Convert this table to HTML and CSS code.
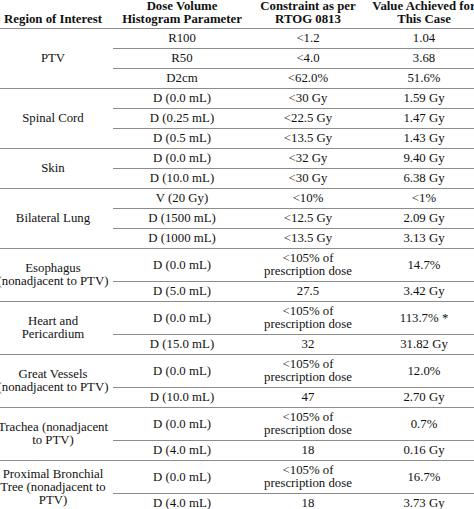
FILE: index.html
```html
<!DOCTYPE html>
<html>
<head>
<meta charset="utf-8">
<link rel="stylesheet" href="styles.css">
</head>
<body>
<div class="crop">
<table class="dvh">
<thead>
<tr>
<th class="c1">Region of Interest</th>
<th class="c2">Dose Volume<br>Histogram Parameter</th>
<th class="c3">Constraint as per<br>RTOG 0813</th>
<th class="c4">Value Achieved for<br>This Case</th>
</tr>
</thead>
<tbody>
<tr><td class="roi" rowspan="3">PTV</td><td>R100</td><td>&lt;1.2</td><td>1.04</td></tr>
<tr><td>R50</td><td>&lt;4.0</td><td>3.68</td></tr>
<tr><td>D2cm</td><td>&lt;62.0%</td><td>51.6%</td></tr>

<tr><td class="roi" rowspan="3">Spinal Cord</td><td>D (0.0 mL)</td><td>&lt;30 Gy</td><td>1.59 Gy</td></tr>
<tr><td>D (0.25 mL)</td><td>&lt;22.5 Gy</td><td>1.47 Gy</td></tr>
<tr><td>D (0.5 mL)</td><td>&lt;13.5 Gy</td><td>1.43 Gy</td></tr>

<tr><td class="roi" rowspan="2">Skin</td><td>D (0.0 mL)</td><td>&lt;32 Gy</td><td>9.40 Gy</td></tr>
<tr><td>D (10.0 mL)</td><td>&lt;30 Gy</td><td>6.38 Gy</td></tr>

<tr><td class="roi" rowspan="3">Bilateral Lung</td><td>V (20 Gy)</td><td>&lt;10%</td><td>&lt;1%</td></tr>
<tr><td>D (1500 mL)</td><td>&lt;12.5 Gy</td><td>2.09 Gy</td></tr>
<tr><td>D (1000 mL)</td><td>&lt;13.5 Gy</td><td>3.13 Gy</td></tr>

<tr><td class="roi" rowspan="2">Esophagus<br>(nonadjacent to PTV)</td><td>D (0.0 mL)</td><td>&lt;105% of<br>prescription dose</td><td>14.7%</td></tr>
<tr><td>D (5.0 mL)</td><td>27.5</td><td>3.42 Gy</td></tr>

<tr><td class="roi" rowspan="2">Heart and<br>Pericardium</td><td>D (0.0 mL)</td><td>&lt;105% of<br>prescription dose</td><td>113.7% *</td></tr>
<tr><td>D (15.0 mL)</td><td>32</td><td>31.82 Gy</td></tr>

<tr><td class="roi" rowspan="2">Great Vessels<br>(nonadjacent to PTV)</td><td>D (0.0 mL)</td><td>&lt;105% of<br>prescription dose</td><td>12.0%</td></tr>
<tr><td>D (10.0 mL)</td><td>47</td><td>2.70 Gy</td></tr>

<tr><td class="roi" rowspan="2">Trachea (nonadjacent<br>to PTV)</td><td>D (0.0 mL)</td><td>&lt;105% of<br>prescription dose</td><td>0.7%</td></tr>
<tr><td>D (4.0 mL)</td><td>18</td><td>0.16 Gy</td></tr>

<tr><td class="roi" rowspan="2">Proximal Bronchial<br>Tree (nonadjacent to<br>PTV)</td><td>D (0.0 mL)</td><td>&lt;105% of<br>prescription dose</td><td>16.7%</td></tr>
<tr><td>D (4.0 mL)</td><td>18</td><td>3.73 Gy</td></tr>
</tbody>
</table>
</div>
</body>
</html>
```

FILE: styles.css
```css
html, body {
  margin: 0;
  padding: 0;
  background: #fff;
  overflow: hidden;
}

.crop {
  width: 474px;
  height: 509px;
  overflow: hidden;
}

.dvh {
  border-collapse: collapse;
  table-layout: fixed;
  width: 490px;
  margin-top: -3px;
  margin-left: -7px;
  font-family: "Liberation Serif", "Times New Roman", serif;
  font-size: 12.8px;
  line-height: 13px;
  color: #111;
}

.dvh th,
.dvh td {
  padding: 3px 0;
  text-align: center;
  vertical-align: middle;
  white-space: nowrap;
  border-bottom: 1px solid #8c8c8c;
}

.dvh th {
  font-weight: bold;
  vertical-align: bottom;
  padding-bottom: 2px;
}

.c1 { width: 120px; }
.c2 { width: 138px; }
.c3 { width: 114px; }
.c4 { width: 118px; }
```
